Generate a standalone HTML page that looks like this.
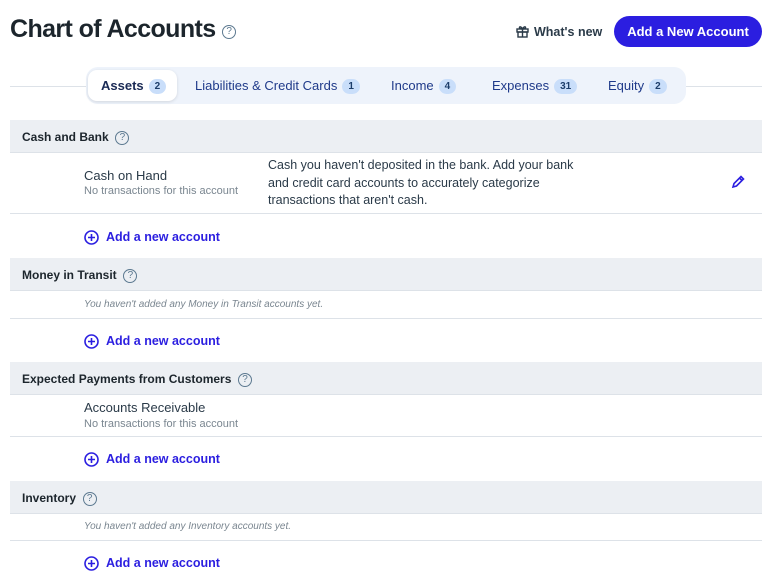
<!DOCTYPE html>
<html><head><style>
*{margin:0;padding:0;box-sizing:border-box}
body{width:768px;height:580px;overflow:hidden;background:#fff;font-family:"Liberation Sans",sans-serif;color:#1c252c;position:relative}
.a{position:absolute;white-space:nowrap}
.q{display:inline-block;width:14px;height:14px;border:1.5px solid #5c7990;border-radius:50%;font-size:10px;line-height:11px;text-align:center;color:#5c7990;font-weight:normal;vertical-align:middle}
.hdr{position:absolute;left:10px;width:752px;height:33px;background:#eceff3;border-bottom:1px solid #dde2e8;font-weight:bold;font-size:12px;padding:10px 0 0 12px}
.line{position:absolute;left:10px;width:752px;height:1px;background:#dde2e8}
.add{position:absolute;left:84px;color:#2b1ee0;font-weight:bold;font-size:12.5px;white-space:nowrap;display:flex;align-items:center;height:16px}
.add svg{margin-right:7px}
.emp{position:absolute;left:84px;font-style:italic;font-size:10px;color:#7a8690}
.tab{position:absolute;top:70px;height:31px;font-size:13px;color:#1f3a8a;padding-top:8px;white-space:nowrap}
.b{display:inline-block;background:#c9defa;color:#1c3d6a;border-radius:9px;font-size:10px;font-weight:bold;padding:2px 6px;margin-left:5px;vertical-align:1px}
</style></head><body>
<div class="a" style="left:10px;top:15px;font-size:25px;font-weight:bold;letter-spacing:-0.6px">Chart of Accounts <span class="q" style="vertical-align:3px">?</span></div>
<div class="a" style="left:516px;top:25px;font-size:12.5px;font-weight:bold;color:#2a3a48"><svg width="13" height="13" viewBox="0 0 13 13" style="vertical-align:-2px;margin-right:5px" fill="none" stroke="#2a3a48" stroke-width="1.4"><rect x="1" y="4" width="11" height="3"/><rect x="2" y="7" width="9" height="5"/><path d="M6.5 4v8M6.5 4C5 1 3 1.5 3.5 3 4 4 6.5 4 6.5 4M6.5 4C8 1 10 1.5 9.5 3 9 4 6.5 4 6.5 4"/></svg>What's new</div>
<div class="a" style="left:614px;top:16px;width:148px;height:31px;background:#2b1ee0;border-radius:16px;color:#fff;font-weight:bold;font-size:13px;text-align:center;line-height:31px">Add a New Account</div>
<div class="line" style="top:86px"></div>
<div class="a" style="left:86px;top:67px;width:600px;height:37px;background:#eef3fb;border-radius:12px"></div>
<div class="a" style="left:88px;top:70px;width:89px;height:31px;background:#fff;border-radius:9px;box-shadow:0 1px 3px rgba(0,0,0,.12)"></div>
<div class="tab" style="left:101px;font-weight:bold;color:#1a2a55">Assets<span class="b">2</span></div>
<div class="tab" style="left:195px">Liabilities &amp; Credit Cards<span class="b">1</span></div>
<div class="tab" style="left:391px">Income<span class="b">4</span></div>
<div class="tab" style="left:492px">Expenses<span class="b">31</span></div>
<div class="tab" style="left:608px">Equity<span class="b">2</span></div>

<div class="hdr" style="top:120px">Cash and Bank &nbsp;<span class="q">?</span></div>
<div class="a" style="left:84px;top:168px;font-size:13px;color:#2a3a48">Cash on Hand</div>
<div class="a" style="left:84px;top:185px;font-size:11px;color:#7a8690">No transactions for this account</div>
<div class="a" style="left:268px;top:157px;font-size:12.5px;line-height:17.5px;color:#2a3a48">Cash you haven't deposited in the bank. Add your bank<br>and credit card accounts to accurately categorize<br>transactions that aren't cash.</div>
<svg class="a" style="left:731px;top:175px" width="14" height="14" viewBox="0 0 14 14" fill="none" stroke="#2b1ee0" stroke-width="1.6"><path d="M2 12l1-3.5 7-7 2.5 2.5-7 7z M8.5 3l2.5 2.5"/></svg>
<div class="line" style="top:213px"></div>
<div class="add" style="top:229px"><svg width="15" height="15" viewBox="0 0 15 15" fill="none" stroke="#2b1ee0" stroke-width="1.6"><circle cx="7.5" cy="7.5" r="6.5"/><path d="M7.5 4v7M4 7.5h7"/></svg>Add a new account</div>

<div class="hdr" style="top:258px">Money in Transit &nbsp;<span class="q">?</span></div>
<div class="emp" style="top:299px">You haven't added any Money in Transit accounts yet.</div>
<div class="line" style="top:318px"></div>
<div class="add" style="top:333px"><svg width="15" height="15" viewBox="0 0 15 15" fill="none" stroke="#2b1ee0" stroke-width="1.6"><circle cx="7.5" cy="7.5" r="6.5"/><path d="M7.5 4v7M4 7.5h7"/></svg>Add a new account</div>

<div class="hdr" style="top:362px">Expected Payments from Customers &nbsp;<span class="q">?</span></div>
<div class="a" style="left:84px;top:400px;font-size:13px;color:#2a3a48">Accounts Receivable</div>
<div class="a" style="left:84px;top:418px;font-size:11px;color:#7a8690">No transactions for this account</div>
<div class="line" style="top:436px"></div>
<div class="add" style="top:451px"><svg width="15" height="15" viewBox="0 0 15 15" fill="none" stroke="#2b1ee0" stroke-width="1.6"><circle cx="7.5" cy="7.5" r="6.5"/><path d="M7.5 4v7M4 7.5h7"/></svg>Add a new account</div>

<div class="hdr" style="top:481px">Inventory &nbsp;<span class="q">?</span></div>
<div class="emp" style="top:521px">You haven't added any Inventory accounts yet.</div>
<div class="line" style="top:540px"></div>
<div class="add" style="top:555px"><svg width="15" height="15" viewBox="0 0 15 15" fill="none" stroke="#2b1ee0" stroke-width="1.6"><circle cx="7.5" cy="7.5" r="6.5"/><path d="M7.5 4v7M4 7.5h7"/></svg>Add a new account</div>
</body></html>
